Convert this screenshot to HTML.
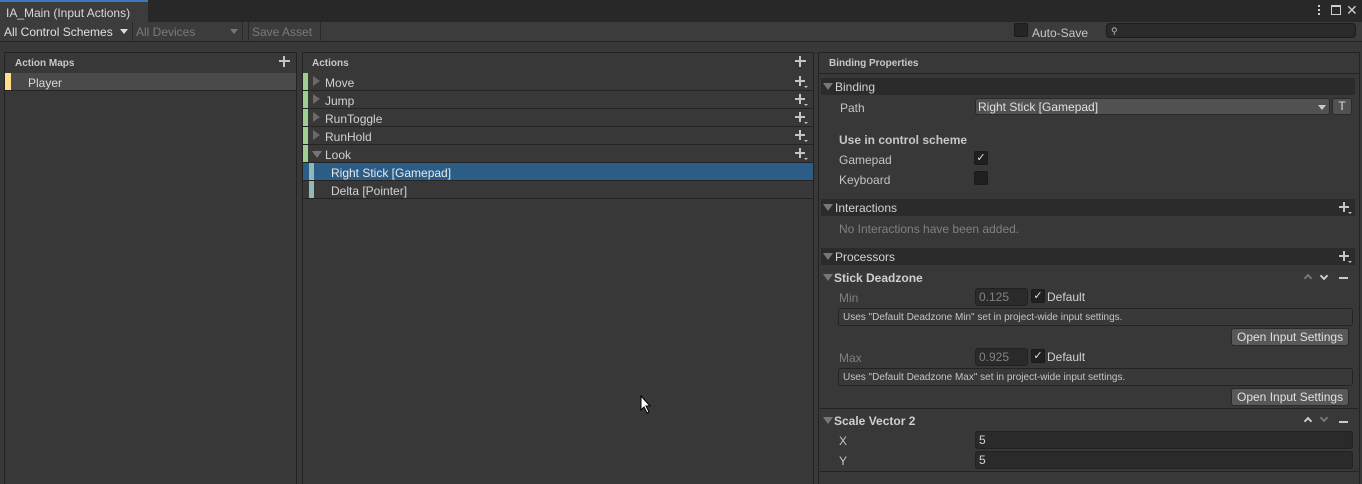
<!DOCTYPE html>
<html><head><meta charset="utf-8"><style>
*{margin:0;padding:0;box-sizing:border-box}
html,body{width:1362px;height:484px;overflow:hidden}
body{background:#383838;font-family:"Liberation Sans",sans-serif;font-size:12px;color:#d2d2d2;position:relative}
.a{position:absolute}
.t{position:absolute;white-space:nowrap;line-height:14px}
.b{font-weight:bold;font-size:10px;color:#c8c8c8}
.plus{position:absolute;width:11px;height:11px}
.plus:before{content:"";position:absolute;left:0;top:4px;width:11px;height:2px;background:#c4c4c4}
.plus:after{content:"";position:absolute;left:4px;top:0;width:2px;height:11px;background:#c4c4c4}
.pd{position:absolute;width:12px;height:12px}
.pd:before{content:"";position:absolute;left:0;top:4px;width:10px;height:2px;background:#c4c4c4}
.pd:after{content:"";position:absolute;left:4px;top:0;width:2px;height:10px;background:#c4c4c4}
.pd i{position:absolute;left:9px;top:10px;border-left:2px solid transparent;border-right:2px solid transparent;border-top:2px solid #c4c4c4}
.row{position:absolute;left:303px;width:510px;height:18px;border-bottom:1px solid #242424}
.gb{position:absolute;left:0;top:0;width:5px;height:17px;background:#9fcf8f}
.tri{position:absolute;width:0;height:0;border-top:5px solid transparent;border-bottom:5px solid transparent;border-left:7px solid #6a6a6a}
.trd{position:absolute;width:0;height:0;border-left:5px solid transparent;border-right:5px solid transparent;border-top:7px solid #777}
.sec{position:absolute;left:821px;width:534px;height:17px;background:#2b2b2b}
.cb{position:absolute;width:14px;height:14px;background:#202020;border:1px solid #1a1a1a;border-radius:2px;color:#e0e0e0;font-size:11px;line-height:12px;text-align:center}
.btn{position:absolute;height:18px;background:#585858;border:1px solid #2a2a2a;border-radius:3px;color:#e0e0e0;line-height:16px;padding:0 5px}
.help{position:absolute;left:838px;width:515px;height:18px;background:#393939;border:1px solid #232323;border-radius:3px;font-size:10px;color:#c4c4c4;line-height:17px;padding-left:4px}
.fld{position:absolute;height:18px;background:#2a2a2a;border:1px solid #212121;border-radius:3px;line-height:16px;padding-left:3px}
.lbl{color:#c4c4c4}
.dim{color:#808080}
</style></head><body>
<div class="a" style="left:0;top:0;width:1362px;height:22px;background:#282828"></div>
<div class="a" style="left:0;top:0;width:148px;height:22px;background:#3c3c3c;border-top:2px solid #3a79bb"></div>
<div class="t" style="left:6px;top:6px;color:#d8d8d8">IA_Main (Input Actions)</div>
<div class="a" style="left:1318px;top:5px;width:2px;height:2px;background:#ccc;box-shadow:0 4px #ccc,0 8px #ccc"></div>
<div class="a" style="left:1331px;top:5px;width:10px;height:10px;border:1px solid #ccc;border-top-width:2px"></div>
<div class="t" style="left:1346px;top:3px;font-size:14px;color:#ccc">✕</div>
<div class="a" style="left:0;top:22px;width:1362px;height:20px;background:#3c3c3c;border-bottom:1px solid #232323"></div>
<div class="t" style="left:4px;top:25px;color:#e0e0e0">All Control Schemes</div>
<div class="a" style="left:120px;top:29px;border-left:4px solid transparent;border-right:4px solid transparent;border-top:5px solid #ddd"></div>
<div class="a" style="left:132px;top:22px;width:1px;height:20px;background:#2a2a2a"></div>
<div class="t" style="left:136px;top:25px;color:#7a7a7a">All Devices</div>
<div class="a" style="left:230px;top:29px;border-left:4px solid transparent;border-right:4px solid transparent;border-top:5px solid #777"></div>
<div class="a" style="left:242px;top:22px;width:1px;height:20px;background:#2a2a2a"></div>
<div class="a" style="left:248px;top:22px;width:73px;height:20px;border-left:1px solid #2a2a2a;border-right:1px solid #2a2a2a"></div>
<div class="t" style="left:252px;top:25px;color:#7a7a7a">Save Asset</div>
<div class="a" style="left:1014px;top:23px;width:14px;height:14px;background:#252525;border:1px solid #1a1a1a;border-radius:2px"></div>
<div class="t" style="left:1032px;top:26px;color:#c8c8c8">Auto-Save</div>
<div class="a" style="left:1106px;top:23px;width:250px;height:15px;background:#2a2a2a;border:1px solid #1c1c1c;border-radius:4px"></div>
<div class="t" style="left:1111px;top:24px;font-size:9px;color:#bbb">⚲</div>

<div class="a" style="left:4px;top:52px;width:293px;height:440px;border:1px solid #232323"></div>
<div class="t b" style="left:15px;top:57px">Action Maps</div>
<div class="plus" style="left:279px;top:56px"></div>
<div class="a" style="left:5px;top:73px;width:291px;height:18px;background:#4a4a4a;border-bottom:1px solid #242424"></div>
<div class="a" style="left:5px;top:73px;width:6px;height:17px;background:#ffde8c"></div>
<div class="t" style="left:28px;top:76px;color:#d8d8d8">Player</div>

<div class="a" style="left:302px;top:52px;width:512px;height:440px;border:1px solid #232323"></div>
<div class="t b" style="left:312px;top:57px">Actions</div>
<div class="plus" style="left:795px;top:56px"></div>

<div class="row" style="top:73px"><div class="gb"></div><div class="tri" style="left:10px;top:3px"></div><div class="t" style="left:22px;top:3px">Move</div><div class="pd" style="left:492px;top:3px"><i></i></div></div>
<div class="row" style="top:91px"><div class="gb"></div><div class="tri" style="left:10px;top:3px"></div><div class="t" style="left:22px;top:3px">Jump</div><div class="pd" style="left:492px;top:3px"><i></i></div></div>
<div class="row" style="top:109px"><div class="gb"></div><div class="tri" style="left:10px;top:3px"></div><div class="t" style="left:22px;top:3px">RunToggle</div><div class="pd" style="left:492px;top:3px"><i></i></div></div>
<div class="row" style="top:127px"><div class="gb"></div><div class="tri" style="left:10px;top:3px"></div><div class="t" style="left:22px;top:3px">RunHold</div><div class="pd" style="left:492px;top:3px"><i></i></div></div>
<div class="row" style="top:145px"><div class="gb"></div><div class="trd" style="left:9px;top:6px"></div><div class="t" style="left:22px;top:3px">Look</div><div class="pd" style="left:492px;top:3px"><i></i></div></div>
<div class="row" style="top:163px;background:#2c5d87"><div class="a" style="left:6px;top:0;width:5px;height:17px;background:#8fb8b8"></div><div class="t" style="left:28px;top:3px;color:#e8e8e8">Right Stick [Gamepad]</div></div>
<div class="row" style="top:181px"><div class="a" style="left:6px;top:0;width:5px;height:17px;background:#8fb8b8"></div><div class="t" style="left:28px;top:3px">Delta [Pointer]</div></div>

<div class="a" style="left:818px;top:52px;width:542px;height:440px;border:1px solid #232323"></div>
<div class="t b" style="left:829px;top:57px">Binding Properties</div>
<div class="a" style="left:819px;top:73px;width:540px;height:1px;background:#232323"></div>
<div class="sec" style="top:78px"></div><div class="trd" style="left:823px;top:83px"></div><div class="t" style="left:835px;top:80px">Binding</div>
<div class="t lbl" style="left:840px;top:101px">Path</div>
<div class="a" style="left:975px;top:98px;width:355px;height:17px;background:#515151;border:1px solid #2a2a2a;border-radius:3px"></div>
<div class="t" style="left:978px;top:100px;color:#e0e0e0">Right Stick [Gamepad]</div>
<div class="a" style="left:1318px;top:105px;border-left:4px solid transparent;border-right:4px solid transparent;border-top:5px solid #ccc"></div>
<div class="a" style="left:1332px;top:98px;width:20px;height:17px;background:#515151;border:1px solid #2a2a2a;border-radius:3px;text-align:center;line-height:15px;color:#ddd">T</div>
<div class="t" style="left:839px;top:133px;font-weight:bold;color:#c8c8c8">Use in control scheme</div>
<div class="t lbl" style="left:839px;top:153px">Gamepad</div>
<div class="cb" style="left:974px;top:151px">✓</div>
<div class="t lbl" style="left:839px;top:173px">Keyboard</div>
<div class="cb" style="left:974px;top:171px"></div>

<div class="sec" style="top:199px"></div><div class="trd" style="left:823px;top:204px"></div><div class="t" style="left:835px;top:201px">Interactions</div><div class="pd" style="left:1339px;top:202px"><i></i></div>
<div class="t dim" style="left:839px;top:222px">No Interactions have been added.</div>
<div class="sec" style="top:248px"></div><div class="trd" style="left:823px;top:253px"></div><div class="t" style="left:835px;top:250px">Processors</div><div class="pd" style="left:1339px;top:251px"><i></i></div>

<div class="trd" style="left:823px;top:274px"></div><div class="t" style="left:834px;top:271px;font-weight:bold;color:#d0d0d0">Stick Deadzone</div>
<div class="a" style="left:1305px;top:275px;width:6px;height:6px;border-left:2px solid #777;border-top:2px solid #777;transform:rotate(45deg)"></div>
<div class="a" style="left:1321px;top:273px;width:6px;height:6px;border-right:2px solid #ccc;border-bottom:2px solid #ccc;transform:rotate(45deg)"></div>
<div class="a" style="left:1339px;top:277px;width:9px;height:2px;background:#ccc"></div>
<div class="t dim" style="left:839px;top:291px">Min</div>
<div class="fld dim" style="left:975px;top:288px;width:53px">0.125</div>
<div class="cb" style="left:1031px;top:289px">✓</div>
<div class="t" style="left:1047px;top:290px">Default</div>
<div class="help" style="top:308px">Uses "Default Deadzone Min" set in project-wide input settings.</div>
<div class="btn" style="left:1231px;top:328px">Open Input Settings</div>
<div class="t dim" style="left:839px;top:351px">Max</div>
<div class="fld dim" style="left:975px;top:348px;width:53px">0.925</div>
<div class="cb" style="left:1031px;top:349px">✓</div>
<div class="t" style="left:1047px;top:350px">Default</div>
<div class="help" style="top:368px">Uses "Default Deadzone Max" set in project-wide input settings.</div>
<div class="btn" style="left:1231px;top:388px">Open Input Settings</div>
<div class="a" style="left:820px;top:408px;width:538px;height:1px;background:#232323"></div>

<div class="trd" style="left:823px;top:417px"></div><div class="t" style="left:834px;top:414px;font-weight:bold;color:#d0d0d0">Scale Vector 2</div>
<div class="a" style="left:1305px;top:418px;width:6px;height:6px;border-left:2px solid #ccc;border-top:2px solid #ccc;transform:rotate(45deg)"></div>
<div class="a" style="left:1321px;top:415px;width:6px;height:6px;border-right:2px solid #777;border-bottom:2px solid #777;transform:rotate(45deg)"></div>
<div class="a" style="left:1339px;top:421px;width:9px;height:2px;background:#ccc"></div>
<div class="t lbl" style="left:839px;top:434px">X</div>
<div class="fld" style="left:975px;top:431px;width:378px">5</div>
<div class="t lbl" style="left:839px;top:454px">Y</div>
<div class="fld" style="left:975px;top:451px;width:378px">5</div>
<div class="a" style="left:820px;top:471px;width:538px;height:1px;background:#232323"></div>

<svg class="a" style="left:640px;top:395px" width="12" height="20"><path d="M1 1 L1 15 L4 12 L7 18 L9 17 L6 11 L10 11 Z" fill="#fff" stroke="#000" stroke-width="1"/></svg>
</body></html>
